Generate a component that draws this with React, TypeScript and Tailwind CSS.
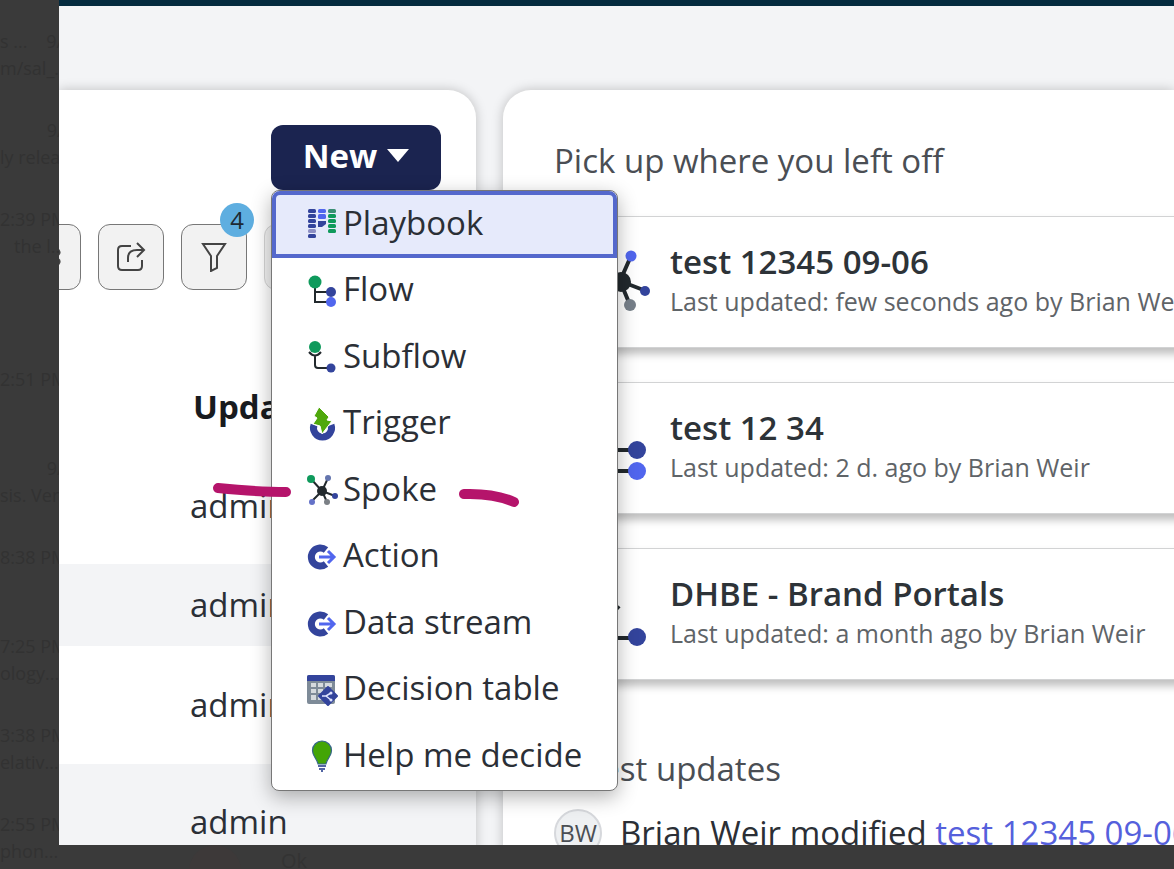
import { type ReactNode } from "react";
import { Settings } from "lucide-react";

const BLUE = "#33449c";
const LIGHT_BLUE = "#5166ee";
const GREEN = "#0f9a5c";
const INK = "#22292d";

function PlaybookIcon() {
    return (
        <>
            {[2, 7, 12, 17, 22, 27].map((y) => (
                <rect key={y} x="2" y={y} width="8" height="4" rx="1.5" fill={y === 22 ? "#8d8fc4" : BLUE} />
            ))}
            <rect x="12" y="2" width="8" height="4" rx="1.5" fill={LIGHT_BLUE} />
            <rect x="12" y="7" width="8" height="5" rx="1.5" fill={LIGHT_BLUE} />
            <path d="M12 14h8v3l-4 3h-4z" fill={BLUE} />
            {[2, 7, 12, 17, 22].map((y) => (
                <rect key={y} x="22" y={y} width="8" height="4" rx="1.5" fill={y === 2 ? "#3a8f74" : GREEN} />
            ))}
        </>
    );
}

function FlowIcon() {
    return (
        <>
            <path d="M9 10v18h15M9 18h15" fill="none" stroke={INK} strokeWidth="2" />
            <circle cx="9" cy="8" r="6.5" fill={GREEN} />
            <circle cx="25" cy="18" r="5" fill={BLUE} />
            <circle cx="25" cy="28" r="5" fill={LIGHT_BLUE} />
        </>
    );
}

function SubflowIcon() {
    return (
        <>
            <path d="M9 16v9q0 3 3 3h12M3 12q6 7 12 0" fill="none" stroke={INK} strokeWidth="2" />
            <circle cx="9" cy="7" r="6" fill={GREEN} />
            <circle cx="25" cy="28" r="4.5" fill={BLUE} />
        </>
    );
}

function TriggerIcon() {
    return (
        <>
            <path d="M8 18a9 9 0 1 0 17 0" fill="none" stroke={BLUE} strokeWidth="7" />
            <path d="M13 0l10 10-2 3 5 1-10 13-2-8-7-2 4-6-3-2z" fill="#4fa80c" stroke="#fff" strokeWidth="1" />
        </>
    );
}

function SpokeIcon() {
    return (
        <>
            <path d="M5 5l11 12M22 4l-6 13M29 22l-13-5M5 28l11-11M21 28l-5-11" stroke={INK} strokeWidth="2" />
            <circle cx="16" cy="17" r="5" fill={INK} />
            <circle cx="5" cy="5" r="4" fill={GREEN} />
            <circle cx="22" cy="4" r="3" fill="#6475ae" />
            <circle cx="29" cy="22" r="3" fill={BLUE} />
            <circle cx="6" cy="28" r="3" fill="#6472c8" />
            <circle cx="21" cy="28" r="3" fill="#7b8086" />
        </>
    );
}

function ActionIcon() {
    return (
        <>
            <path d="M20 10a9 9 0 1 0 0 14" fill="none" stroke={BLUE} strokeWidth="7" />
            <path d="M11 17h16M22 11l6 6-6 6" fill="none" stroke="#fff" strokeWidth="5" />
            <path d="M13 17h15M22 11l6 6-6 6" fill="none" stroke={LIGHT_BLUE} strokeWidth="3" />
        </>
    );
}

function DecisionTableIcon() {
    return (
        <>
            <rect x="1" y="2" width="28" height="29" rx="2" fill="#7e8b98" />
            <path d="M1 8V4q0-2 2-2h24q2 0 2 2v4z" fill={BLUE} />
            <rect x="5" y="10" width="21" height="17" fill="#d5dade" />
            <path d="M5 15h21M5 21h21M11 10v17M18 10v17" stroke="#7e8b98" strokeWidth="2" />
            <path d="M22 14l9 9-9 9-9-9z" fill={BLUE} stroke={BLUE} strokeWidth="2" strokeLinejoin="round" />
            <path d="M16 23h4l5-3M20 23l5 4" fill="none" stroke="#dfe4ff" strokeWidth="1.500" />
            <circle cx="25" cy="20" r="1.500" fill="#dfe4ff" />
            <circle cx="25" cy="27" r="1.500" fill="#dfe4ff" />
        </>
    );
}

function BulbIcon() {
    return (
        <>
            <path
                d="M16 1a9.500 9.500 0 0 0-9.500 9.500c0 6 4.500 8 5.500 13.500h8c1-5.500 5.500-7.500 5.500-13.500A9.500 9.500 0 0 0 16 1z"
                fill="#43a506"
                stroke="#36668a"
                strokeWidth="1.200"
            />
            <path d="M12 26h8M13 29h6M15 31h2" stroke="#5265a4" strokeWidth="2" />
        </>
    );
}

const menuItems: { label: string; icon: ReactNode }[] = [
    { label: "Playbook", icon: <PlaybookIcon /> },
    { label: "Flow", icon: <FlowIcon /> },
    { label: "Subflow", icon: <SubflowIcon /> },
    { label: "Trigger", icon: <TriggerIcon /> },
    { label: "Spoke", icon: <SpokeIcon /> },
    { label: "Action", icon: <ActionIcon /> },
    { label: "Data stream", icon: <ActionIcon /> },
    { label: "Decision table", icon: <DecisionTableIcon /> },
    { label: "Help me decide", icon: <BulbIcon /> },
];

const rows = [
    { user: "admin", className: "h-[116px]" },
    { user: "admin", className: "h-[82px] bg-[#f3f4f6]" },
    { user: "admin", className: "h-[118px]" },
    { user: "admin", className: "h-[116px] bg-[#f3f4f6]" },
];

const recents: { title: string; updated: string; icon: ReactNode }[] = [
    {
        title: "test 12345 09-06",
        updated: "few seconds ago by Brian Weir",
        icon: (
            <>
                <path d="M34 32L45 7M34 32l26 10M34 32l10 24M34 32L12 12M34 32L12 54" stroke={INK} strokeWidth="4" />
                <circle cx="35" cy="33" r="10" fill={INK} />
                <circle cx="12" cy="12" r="8" fill={GREEN} />
                <circle cx="12" cy="54" r="6" fill={LIGHT_BLUE} />
                <circle cx="45" cy="7" r="5.500" fill={LIGHT_BLUE} />
                <circle cx="59" cy="42" r="5" fill={BLUE} />
                <circle cx="44" cy="56" r="6" fill="#77808a" />
            </>
        ),
    },
    {
        title: "test 12 34",
        updated: "2 d. ago by Brian Weir",
        icon: (
            <>
                <path d="M16 14v42h35M16 35h35" fill="none" stroke={INK} strokeWidth="4" />
                <circle cx="16" cy="12" r="11" fill={GREEN} />
                <circle cx="51" cy="35" r="9" fill={BLUE} />
                <circle cx="51" cy="56" r="9" fill={LIGHT_BLUE} />
            </>
        ),
    },
    {
        title: "DHBE - Brand Portals",
        updated: "a month ago by Brian Weir",
        icon: (
            <>
                <path d="M18 36v21h33M4 24q14 20 29 1" fill="none" stroke={INK} strokeWidth="4" />
                <circle cx="18" cy="14" r="11" fill={GREEN} />
                <circle cx="51" cy="56" r="9" fill={BLUE} />
            </>
        ),
    },
];

const messages = [
    { date: "s ...    9/5", text: "m/sal_..." },
    { date: "          9/4", text: "ly release" },
    { date: "2:39 PM", text: "   the l..." },
    { date: "", text: "" },
    { date: "2:51 PM", text: "" },
    { date: "          9/3", text: "sis. Verify" },
    { date: "8:38 PM", text: "" },
    { date: "7:25 PM", text: "ology..." },
    { date: "3:38 PM", text: "elativ..." },
    { date: "2:55 PM", text: "phon..." },
];

function ToolButton({ label, children }: { label: string; children?: ReactNode }) {
    return (
        <button
            type="button"
            aria-label={label}
            className={`relative flex size-[66px] shrink-0 items-center justify-center rounded-xl border bg-[#f2f2f2] text-[#444] ${
                children ? "border-[#777]" : "border-[#d4d4d4]"
            }`}
        >
            {children}
        </button>
    );
}

function NewMenu() {
    return (
        <div className="relative z-20">
            <button
                type="button"
                aria-haspopup="menu"
                aria-expanded="true"
                className="flex h-[65px] w-[170px] items-center justify-center gap-[10px] rounded-xl bg-[#1b2450] pb-1 text-[33px] font-bold text-white"
            >
                New
                <svg width="22" height="13" viewBox="0 0 22 13" aria-hidden="true">
                    <path d="M0 0h22L11 13z" fill="currentColor" />
                </svg>
            </button>
            <ul
                role="menu"
                className="absolute top-full left-0 flex h-[601px] w-[347px] flex-col rounded-lg border border-[#777] bg-white shadow-[0_6px_20px_rgba(0,0,0,0.3)]"
            >
                {menuItems.map((item, index) => (
                    <li key={item.label} role="none" className="relative min-h-0 flex-1">
                        <button
                            type="button"
                            role="menuitem"
                            className={`flex h-full w-full items-center gap-[5px] border-4 pl-[30px] text-[33px] text-[#2b2f36] ${
                                index === 0 ? "rounded-t-lg border-[#5468cc] bg-[#e6eafb]" : "border-transparent"
                            }`}
                        >
                            <svg width="32" height="34" viewBox="0 0 32 34" aria-hidden="true" className="shrink-0">
                                {item.icon}
                            </svg>
                            <span className="pb-1 whitespace-nowrap">{item.label}</span>
                        </button>
                        {/* pen strokes either side of Spoke */}
                        {item.label === "Spoke" && (
                            <svg
                                width="310"
                                height="32"
                                viewBox="0 0 310 32"
                                aria-hidden="true"
                                className="pointer-events-none absolute top-6 left-[-60px]"
                            >
                                <path
                                    d="M6 7q40 4 68 4M252 13q30-1 50 8"
                                    fill="none"
                                    stroke="#b5146b"
                                    strokeWidth="10"
                                    strokeLinecap="round"
                                />
                            </svg>
                        )}
                    </li>
                ))}
            </ul>
        </div>
    );
}

export default function App() {
    return (
        <div className="flex h-screen overflow-hidden bg-[#3a3a3a] font-['Open_Sans',sans-serif]">
            <aside className="w-[59px] shrink-0 overflow-hidden pt-7 text-lg text-[#323232]">
                {messages.map((message, index) => (
                    <div
                        key={index}
                        className={`whitespace-pre leading-[27px] ${index === 3 ? "h-[71px]" : "h-[89px]"}`}
                    >
                        <p className="h-[27px]">{message.date}</p>
                        <p className="h-[27px]">{message.text}</p>
                    </div>
                ))}
            </aside>

            <div className="flex min-w-0 flex-1 flex-col">
                <main className="min-h-0 flex-1 overflow-hidden bg-[#f3f4f6]">
                    <div className="h-[6px] bg-[#042b3f]" />
                    <div className="flex gap-[27px] pt-[84px]">
                        <section className="relative z-10 w-[417px] shrink-0 rounded-tr-[28px] bg-white pt-[35px] shadow-[0_0_12px_rgba(0,0,0,0.22)]">
                            <div className="flex justify-end pr-[35px]">
                                <NewMenu />
                            </div>
                            <div className="mt-[34px] flex justify-end gap-[17px] pr-[146px]">
                                <ToolButton label="Settings">
                                    <Settings size={30} strokeWidth={2} />
                                </ToolButton>
                                <ToolButton label="Share">
                                    <svg width="30" height="30" viewBox="0 0 30 30" fill="none" stroke="currentColor" strokeWidth="2" aria-hidden="true">
                                        <path d="M15 4H6q-4 0-4 4v16q0 4 4 4h16q4 0 4-4v-6" />
                                        <path d="M12 20v-4q0-8 9-8h7M21 1l7 7-7 7" />
                                    </svg>
                                </ToolButton>
                                <ToolButton label="Filter">
                                    <svg width="26" height="30" viewBox="0 0 26 30" fill="none" stroke="currentColor" strokeWidth="2" aria-hidden="true">
                                        <path d="M2 2h22l-8 12v12l-6 3V14z" />
                                    </svg>
                                    <span className="absolute -top-[22px] -right-2 flex size-[34px] items-center justify-center rounded-full bg-[#5eaee0] text-2xl text-[#1d2a33]">
                                        4
                                    </span>
                                </ToolButton>
                                <ToolButton label="More" />
                            </div>
                            <table className="mt-[76px] w-full text-left text-[33px] text-[#2b2f36]">
                                <thead>
                                    <tr className="h-[82px]">
                                        <th className="py-0 pl-[134px] font-bold text-[#181b1f]">Updated by</th>
                                    </tr>
                                </thead>
                                <tbody>
                                    {rows.map((row, index) => (
                                        <tr key={index} className={row.className}>
                                            <td className="py-0 pl-[131px]">{row.user}</td>
                                        </tr>
                                    ))}
                                </tbody>
                            </table>
                        </section>

                        <section className="min-w-0 flex-1 rounded-tl-[28px] bg-white pt-[47px] pb-10 pl-[51px] whitespace-nowrap shadow-[0_0_12px_rgba(0,0,0,0.22)]">
                            <h2 className="text-[33px] leading-[48px] text-[#4a4e54]">Pick up where you left off</h2>
                            <div className="mt-[31px] -mr-8 flex flex-col gap-[34px]">
                                {recents.map((recent) => (
                                    <article
                                        key={recent.title}
                                        className="flex h-[132px] items-center gap-5 border border-[#d2d3d4] bg-white pl-[31px] shadow-[0_6px_8px_rgba(0,0,0,0.25)]"
                                    >
                                        <svg width="64" height="66" viewBox="0 0 64 66" aria-hidden="true" className="shrink-0">
                                            {recent.icon}
                                        </svg>
                                        <div className="pb-[2px]">
                                            <h3 className="text-[33px] leading-10 font-semibold text-[#2d3338]">{recent.title}</h3>
                                            <p className="text-[25px] leading-[38px] text-[#5f6468]">Last updated: {recent.updated}</p>
                                        </div>
                                    </article>
                                ))}
                            </div>
                            <h2 className="mt-[65px] text-[33px] leading-[48px] text-[#4a4e54]">Latest updates</h2>
                            <div className="mt-4 flex items-center gap-[18px]">
                                <span className="flex size-12 shrink-0 items-center justify-center rounded-full border-2 border-[#d6d8dc] bg-[#eef0f2] text-2xl text-[#4a4e54]">
                                    BW
                                </span>
                                <p className="text-[33px] leading-[48px] text-[#2b2f36]">
                                    Brian Weir modified{" "}
                                    <a href="#test-12345" className="text-[#5560dc]">
                                        test 12345 09-06
                                    </a>
                                </p>
                            </div>
                        </section>
                    </div>
                </main>
                <footer className="flex h-6 shrink-0 items-start gap-10 overflow-hidden pl-[130px] text-xl text-[#333]">
                    <span className="size-[52px] shrink-0 rounded-full bg-[#3d3939]" />
                    <span className="leading-8">Ok</span>
                </footer>
            </div>
        </div>
    );
}
